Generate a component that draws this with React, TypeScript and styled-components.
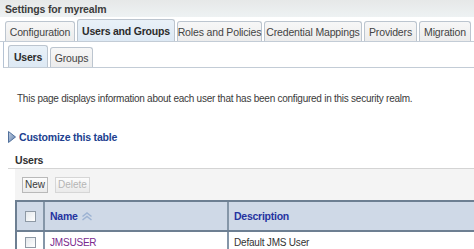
import React from 'react';
import styled, { createGlobalStyle } from 'styled-components';

const GlobalStyle = createGlobalStyle`
  html, body {
    margin: 0;
    padding: 0;
    background: #ffffff;
    font-family: "Liberation Sans", Arial, sans-serif;
    font-size: 11px;
    color: #333333;
    overflow: hidden;
  }
`;

const Page = styled.div`
  width: 474px;
  height: 249px;
  overflow: hidden;
`;

const Title = styled.div`
  height: 17px;
  padding-left: 5px;
  display: flex;
  align-items: center;
  font-weight: bold;
  font-size: 10.5px;
  letter-spacing: -0.15px;
  color: #3c3c3c;
  background: linear-gradient(to bottom, #e6e8e8, #eef2f3);
`;

const TabBar = styled.div`
  display: flex;
  align-items: flex-end;
  gap: 2px;
  height: 24px;
  padding-left: 5px;
  border-bottom: 1px solid #c3ccd6;
`;

const Tab = styled.div<{ $active?: boolean; $w: number }>`
  width: ${p => p.$w}px;
  box-sizing: border-box;
  height: ${p => (p.$active ? 22 : 20)}px;
  display: flex;
  align-items: center;
  justify-content: center;
  border: 1px solid #bcc5cf;
  border-bottom: none;
  border-radius: 3px 3px 0 0;
  font-weight: ${p => (p.$active ? 'bold' : 'normal')};
  font-size: 10.5px;
  letter-spacing: ${p => (p.$active ? '-0.2px' : '-0.15px')};
  color: ${p => (p.$active ? '#2b2b2b' : '#444444')};
  background: ${p => (p.$active
    ? 'linear-gradient(to bottom, #e9f1f8, #dde9f4)'
    : 'linear-gradient(to bottom, #f7f7f7, #ececec)')};
  white-space: nowrap;
`;

const SubBar = styled.div`
  display: flex;
  align-items: flex-end;
  gap: 2px;
  height: 25px;
  margin-left: 3px;
  padding-left: 4px;
  border-left: 1px solid #b5c3d4;
  border-bottom: 1px solid #c3ccd6;
`;

const Content = styled.div`
  padding-left: 8px;
`;

const Intro = styled.p`
  margin: 0;
  padding: 24px 0 0 9px;
  height: 13px;
  line-height: 13px;
  font-size: 10px;
  letter-spacing: -0.25px;
  color: #3a3a3a;
`;

const Customize = styled.div`
  display: flex;
  align-items: center;
  gap: 3px;
  margin-top: 25px;
  height: 14px;
  font-weight: bold;
  font-size: 10.5px;
  letter-spacing: -0.2px;
  color: #213f8f;
`;

const SectionTitle = styled.div`
  margin-top: 10px;
  height: 14px;
  padding-left: 7px;
  font-weight: bold;
  font-size: 10.5px;
  letter-spacing: -0.2px;
  color: #2f2f2f;
  border-bottom: 1px solid #d4d4d4;
`;

const Toolbar = styled.div`
  margin-left: 7px;
  height: 31px;
  display: flex;
  align-items: center;
  gap: 7px;
  padding-left: 7px;
  background: #f4f4f4;
`;

const Button = styled.div<{ $disabled?: boolean }>`
  height: 16px;
  box-sizing: border-box;
  padding: 0 2px;
  display: flex;
  align-items: center;
  border: 1px solid ${p => (p.$disabled ? '#d6d6d6' : '#b9b9b9')};
  background: linear-gradient(to bottom, #fcfcfc, #eaeaea);
  font-size: 10px;
  color: ${p => (p.$disabled ? '#b5b5b5' : '#3a3a3a')};
`;

const Table = styled.div`
  margin-left: 7px;
  border-left: 2px solid #6d7f92;
`;

const HeaderRow = styled.div`
  display: grid;
  grid-template-columns: 28px 184px 1fr;
  height: 28px;
  border-top: 2px solid #6d7f92;
  border-bottom: 2px solid #6d7f92;
  background: #cfd9e7;
`;

const Row = styled.div`
  display: grid;
  grid-template-columns: 28px 184px 1fr;
  height: 20px;
`;

const Cell = styled.div<{ $center?: boolean; $last?: boolean }>`
  display: flex;
  align-items: center;
  justify-content: ${p => (p.$center ? 'center' : 'flex-start')};
  padding-left: ${p => (p.$center ? 0 : 5)}px;
  border-right: ${p => (p.$last ? 'none' : '2px solid #8596a8')};
`;

const HeadText = styled.span`
  font-weight: bold;
  font-size: 10.5px;
  letter-spacing: -0.25px;
  color: #2533a0;
`;

const Check = styled.span`
  width: 11px;
  height: 11px;
  box-sizing: border-box;
  border: 1px solid #8e99a5;
  background: linear-gradient(135deg, #e4e8ec, #ffffff);
`;

const UserLink = styled.span`
  font-size: 10px;
  letter-spacing: -0.2px;
  color: #7a2a8e;
`;

const CellText = styled.span`
  font-size: 10px;
  letter-spacing: -0.2px;
  color: #333333;
`;

function Arrow (): React.ReactElement {
  return (
    <svg width='8' height='12' viewBox='0 0 8 12'>
      <defs>
        <linearGradient id='ag' x1='0' y1='0' x2='1' y2='1'>
          <stop offset='0' stopColor='#c7d4e6' />
          <stop offset='1' stopColor='#5b7aa8' />
        </linearGradient>
      </defs>
      <polygon points='0.5,0.5 7.5,6 0.5,11.5' fill='url(#ag)' stroke='#51709c' strokeWidth='1' />
    </svg>
  );
}

function SortIcon (): React.ReactElement {
  return (
    <svg width='12' height='9' viewBox='0 0 12 9' style={{ marginLeft: 3 }}>
      <polyline points='1.5,4.5 6,1 10.5,4.5' fill='none' stroke='#9db3d3' strokeWidth='1.5' />
      <polyline points='1.5,8 6,4.5 10.5,8' fill='none' stroke='#9db3d3' strokeWidth='1.5' />
    </svg>
  );
}

const tabs = [
  { label: 'Configuration', w: 70 },
  { label: 'Users and Groups', w: 98, active: true },
  { label: 'Roles and Policies', w: 85 },
  { label: 'Credential Mappings', w: 98 },
  { label: 'Providers', w: 53 },
  { label: 'Migration', w: 52 }
];

export default function App (): React.ReactElement {
  return (
    <Page>
      <GlobalStyle />
      <Title>Settings for myrealm</Title>
      <TabBar>
        {tabs.map(t => (
          <Tab key={t.label} $active={t.active} $w={t.w}>{t.label}</Tab>
        ))}
      </TabBar>
      <SubBar>
        <Tab $active $w={40}>Users</Tab>
        <Tab $w={43}>Groups</Tab>
      </SubBar>
      <Content>
        <Intro>This page displays information about each user that has been configured in this security realm.</Intro>
        <Customize><Arrow />Customize this table</Customize>
        <SectionTitle>Users</SectionTitle>
        <Toolbar>
          <Button>New</Button>
          <Button $disabled>Delete</Button>
        </Toolbar>
        <Table>
          <HeaderRow>
            <Cell $center><Check /></Cell>
            <Cell><HeadText>Name</HeadText><SortIcon /></Cell>
            <Cell $last><HeadText>Description</HeadText></Cell>
          </HeaderRow>
          <Row>
            <Cell $center><Check /></Cell>
            <Cell><UserLink>JMSUSER</UserLink></Cell>
            <Cell $last><CellText>Default JMS User</CellText></Cell>
          </Row>
        </Table>
      </Content>
    </Page>
  );
}
